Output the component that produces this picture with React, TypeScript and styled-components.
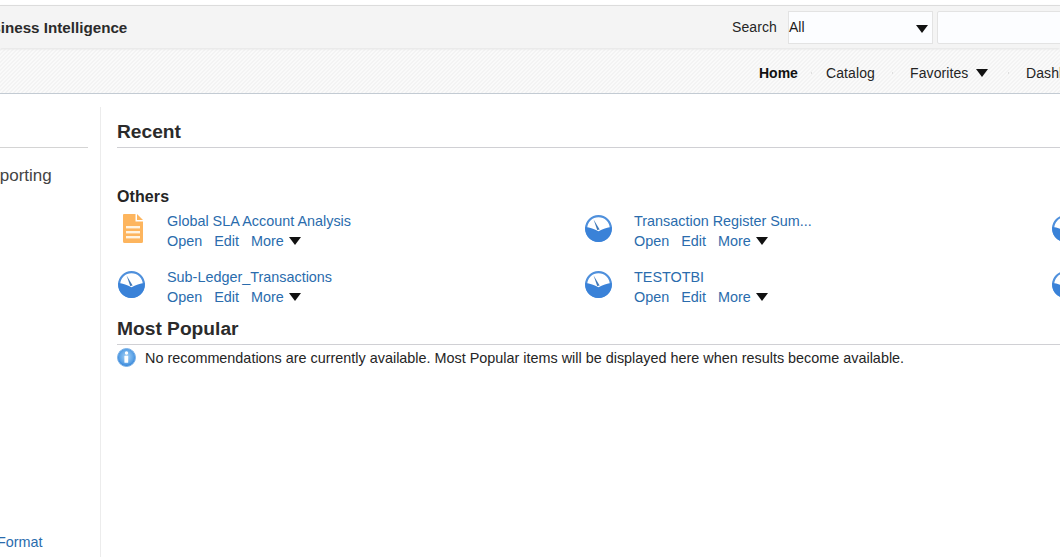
import { FunctionComponent } from "react";
import styled, { createGlobalStyle } from "styled-components";

const GlobalStyle = createGlobalStyle`
  html, body {
    margin: 0;
    padding: 0;
    background: #ffffff;
  }
  body {
    font-family: "Liberation Sans", Arial, sans-serif;
    font-size: 14px;
    color: #252525;
  }
`;

const GaugeIcon: FunctionComponent = () => (
  <svg width="27" height="27" viewBox="0 0 27 27">
    <circle cx="13.5" cy="13.5" r="12.4" fill="#ffffff" stroke="#4f90dc" strokeWidth="2.2" />
    <path
      d="M0.3 12 C5 12.4 9.5 14 13.5 16.2 C17.5 14 22 12.4 26.7 12 C27.4 20.8 21 27 13.5 27 C6 27 -0.4 20.8 0.3 12 Z"
      fill="#3a82d8"
    />
    <path d="M8.6 4.4 L12.2 15 L14.6 14.4 Z" fill="#3f78b8" />
  </svg>
);

const DocIcon: FunctionComponent = () => (
  <svg width="20" height="29" viewBox="0 0 20 29">
    <path d="M1 0 H12.5 V7.5 H20 V27.5 Q20 29 18.5 29 H1.5 Q0 29 0 27.5 V1 Q0 0 1 0 Z" fill="#fdb55e" />
    <path d="M14 0 L20 6 H14 Z" fill="#fdb55e" />
    <rect x="3" y="12" width="14" height="2.4" fill="#fff3e0" />
    <rect x="3" y="17" width="14" height="2.4" fill="#fff3e0" />
    <rect x="3" y="22" width="14" height="2.4" fill="#fff3e0" />
  </svg>
);

const InfoIcon: FunctionComponent = () => (
  <svg width="19" height="19" viewBox="0 0 19 19">
    <defs>
      <radialGradient id="infoFill" cx="50%" cy="45%" r="55%">
        <stop offset="0%" stopColor="#a8d2f5" />
        <stop offset="70%" stopColor="#5da3e6" />
        <stop offset="100%" stopColor="#2f7fd6" />
      </radialGradient>
    </defs>
    <circle cx="9.5" cy="9.5" r="9" fill="url(#infoFill)" stroke="#7fb4e8" strokeWidth="1" />
    <circle cx="9.5" cy="5" r="1.7" fill="#ffffff" />
    <rect x="7.4" y="7.8" width="3.8" height="7" rx="0.6" fill="#ffffff" />
  </svg>
);

const items = [
  [
    { name: "Global SLA Account Analysis", doc: true },
    { name: "Transaction Register Sum..." },
    { name: "" },
  ],
  [{ name: "Sub-Ledger_Transactions" }, { name: "TESTOTBI" }, { name: "" }],
];

const App: FunctionComponent = () => {
  return (
    <Page>
      <GlobalStyle />
      <Header>
        <Title>Business Intelligence</Title>
        <SearchLabel>Search</SearchLabel>
        <SearchSelect>
          All
          <SelectArrow />
        </SearchSelect>
        <SearchInput />
      </Header>
      <Nav>
        <NavItem $active $width={67} $sep={14}>
          Home
        </NavItem>
        <NavItem $width={84} $sep={17}>
          Catalog
        </NavItem>
        <NavItem $width={116} $sep={17}>
          Favorites
          <NavArrow />
        </NavItem>
        <NavItem $width={60}>Dashboards</NavItem>
      </Nav>
      <Body>
        <Sidebar>
          <SidebarRule />
          <SidebarText>Reporting</SidebarText>
          <SidebarLink>Format</SidebarLink>
        </Sidebar>
        <Main>
          <SectionTitle>Recent</SectionTitle>
          <SubTitle>Others</SubTitle>
          {items.map((row, i) => (
            <ItemRow key={i}>
              {row.map((item, j) => (
                <Item key={j}>
                  <IconBox $doc={item.doc}>{item.doc ? <DocIcon /> : <GaugeIcon />}</IconBox>
                  {item.name && (
                    <div>
                      <ItemName>{item.name}</ItemName>
                      <Actions>
                        <ActionLink>Open</ActionLink>
                        <ActionLink>Edit</ActionLink>
                        <ActionLink>
                          More
                          <MoreArrow />
                        </ActionLink>
                      </Actions>
                    </div>
                  )}
                </Item>
              ))}
            </ItemRow>
          ))}
          <PopularTitle>Most Popular</PopularTitle>
          <Notice>
            <InfoIcon />
            <span>
              No recommendations are currently available. Most Popular items will be displayed here when results become
              available.
            </span>
          </Notice>
        </Main>
      </Body>
    </Page>
  );
};

const Page = styled.div`
  width: 1060px;
  height: 557px;
  overflow: hidden;
  padding-top: 5px;
  box-sizing: border-box;
`;

const Header = styled.div`
  display: flex;
  align-items: center;
  height: 43px;
  box-sizing: border-box;
  border-top: 1px solid #dcdcdc;
  background: #f4f4f4;
  box-shadow: 0 1px 2px #e0e0e0;
  position: relative;
`;

const Title = styled.div`
  flex: none;
  width: 760px;
  margin-left: -28px;
  padding-top: 1px;
  font-size: 15.2px;
  font-weight: 700;
  color: #2b2b2b;
`;

const SearchLabel = styled.div`
  flex: none;
  width: 56px;
  letter-spacing: 0.1px;
  color: #252525;
`;

const SearchSelect = styled.div`
  flex: none;
  display: flex;
  align-items: center;
  justify-content: space-between;
  width: 145px;
  height: 33px;
  margin-right: 4px;
  padding: 0 4px 0 0;
  box-sizing: border-box;
  background: #fcfdff;
  border: 1px solid #e3e3e3;
  color: #1c1c1c;
`;

const SelectArrow = styled.span`
  width: 0;
  height: 0;
  margin-top: 3px;
  border-left: 6px solid transparent;
  border-right: 6px solid transparent;
  border-top: 8px solid #111111;
`;

const SearchInput = styled.div`
  flex: none;
  width: 200px;
  height: 33px;
  box-sizing: border-box;
  background: #fcfdff;
  border: 1px solid #e3e3e3;
  border-radius: 2px;
`;

const Nav = styled.div`
  display: flex;
  align-items: center;
  height: 45px;
  margin-top: 1px;
  padding: 4px 0 0 759px;
  box-sizing: border-box;
  border-bottom: 1px solid #c3cbd3;
  background-color: #f6f6f6;
  background-image: linear-gradient(
    135deg,
    #f3f3f3 25%,
    #fafafa 25%,
    #fafafa 50%,
    #f3f3f3 50%,
    #f3f3f3 75%,
    #fafafa 75%
  );
  background-size: 4px 4px;
  overflow: hidden;
`;

const NavItem = styled.div<{ $active?: boolean; $width: number; $sep?: number }>`
  flex: none;
  position: relative;
  display: flex;
  align-items: center;
  width: ${({ $width }) => $width}px;
  white-space: nowrap;
  letter-spacing: ${({ $active }) => ($active ? 0 : 0.1)}px;
  font-weight: ${({ $active }) => ($active ? 700 : 400)};
  color: ${({ $active }) => ($active ? "#111111" : "#252525")};

  &::after {
    content: "";
    display: ${({ $sep }) => ($sep ? "block" : "none")};
    position: absolute;
    top: 7px;
    right: ${({ $sep }) => $sep}px;
    width: 1px;
    height: 2px;
    background: #dedede;
  }
`;

const NavArrow = styled.span`
  width: 0;
  height: 0;
  margin-left: 8px;
  border-left: 6px solid transparent;
  border-right: 6px solid transparent;
  border-top: 8px solid #111111;
`;

const Body = styled.div`
  display: flex;
  height: 450px;
  margin-top: 13px;
`;

const Sidebar = styled.div`
  flex: none;
  position: relative;
  width: 101px;
  box-sizing: border-box;
  border-right: 1px solid #ececec;
  display: flex;
  flex-direction: column;
  padding-top: 40px;
`;

const SidebarRule = styled.div`
  width: 88px;
  height: 1px;
  background: #d4d4d4;
`;

const SidebarText = styled.div`
  margin: 18px 0 0 -22px;
  font-size: 17px;
  line-height: 20px;
  color: #444444;
`;

const SidebarLink = styled.div`
  margin: auto 0 7px -3px;
  font-size: 14.4px;
  color: #2a6cad;
  line-height: 16px;
`;

const Main = styled.div`
  flex: none;
  width: 1000px;
  padding-left: 16px;
  box-sizing: border-box;
`;

const SectionTitle = styled.div`
  height: 41px;
  box-sizing: border-box;
  padding-top: 14px;
  border-bottom: 1px solid #d0d0d4;
  font-size: 19.2px;
  line-height: 22px;
  font-weight: 700;
  color: #2b2b2b;
`;

const SubTitle = styled.div`
  margin: 39px 0 4px;
  font-size: 16px;
  letter-spacing: 0.1px;
  line-height: 20px;
  font-weight: 700;
  color: #252525;
`;

const ItemRow = styled.div`
  display: grid;
  grid-template-columns: repeat(3, 467px);
  height: 56px;
`;

const Item = styled.div`
  display: flex;
`;

const IconBox = styled.div<{ $doc?: boolean }>`
  flex: none;
  display: flex;
  align-items: flex-start;
  width: 50px;
  box-sizing: border-box;
  padding: ${({ $doc }) => ($doc ? "3px 0 0 6px" : "4px 0 0 1px")};
`;

const ItemName = styled.div`
  height: 20px;
  font-size: 14.4px;
  line-height: 20px;
  color: #2a6cad;
  white-space: nowrap;
`;

const Actions = styled.div`
  display: flex;
  gap: 12px;
  font-size: 14.4px;
  line-height: 20px;
`;

const ActionLink = styled.span`
  display: flex;
  align-items: center;
  color: #2a6cad;
`;

const MoreArrow = styled.span`
  width: 0;
  height: 0;
  margin-left: 5px;
  border-left: 6px solid transparent;
  border-right: 6px solid transparent;
  border-top: 8px solid #111111;
`;

const PopularTitle = styled.div`
  height: 27px;
  box-sizing: border-box;
  margin-top: -5px;
  border-bottom: 1px solid #d0d0d4;
  font-size: 19.2px;
  line-height: 22px;
  font-weight: 700;
  color: #2b2b2b;
`;

const Notice = styled.div`
  display: flex;
  align-items: center;
  gap: 9px;
  margin-top: 3px;
  font-size: 14.4px;
  white-space: nowrap;
  color: #252525;
`;

export default App;
